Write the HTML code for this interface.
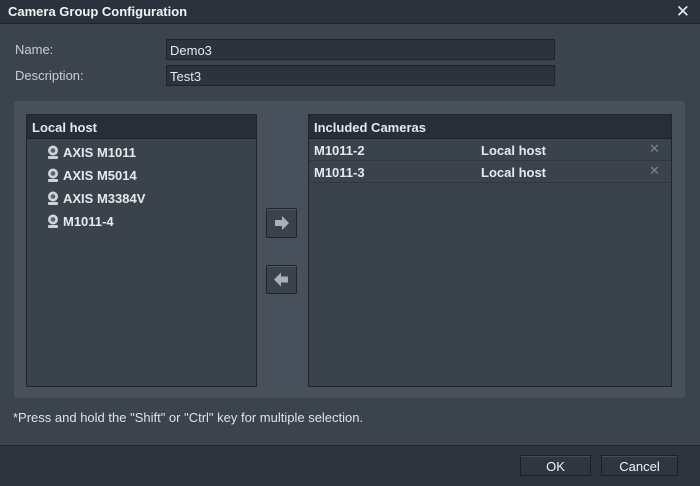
<!DOCTYPE html>
<html><head><style>
*{margin:0;padding:0;box-sizing:border-box}
body{width:700px;height:486px;background:#3b434c;font-family:"Liberation Sans",sans-serif;font-size:13px;color:#e6e9ec;position:relative;overflow:hidden}
.a{position:absolute}
.title{left:0;top:0;width:700px;height:24px;background:#2b323b;border-bottom:1px solid #1f252c;font-weight:bold;color:#f2f4f6;padding:4px 0 0 8px}
.lbl{color:#c9ced3}
.inp{background:#2c333c;border:1px solid #1e242b;height:21px;padding:3px 0 0 3px;color:#e8ebee}
.panel{left:14px;top:101px;width:671px;height:297px;background:#48515b;border-radius:3px}
.list{background:#3a424c;border:1px solid #1f252c}
.hdr{height:24px;background:#272e37;border-bottom:1px solid #1c2229;font-weight:bold;padding:5px 0 0 5px;color:#e6e9ec}
.item{height:23px;padding:5px 0 0 36px;position:relative;font-weight:bold;font-size:13px}
.cam{position:absolute;left:20px;top:5px;width:12px;height:14px}
.row{height:22px;border-bottom:1px solid #2f363f;padding:4px 0 0 5px;position:relative;font-weight:bold}
.btn{background:#3a424b;border:1px solid #1f252c;border-radius:2px;box-shadow:inset 0 1px 0 #4f5863}
.foot{left:0;top:445px;width:700px;height:41px;background:#2d343d;border-top:1px solid #20262d}
.b2{background:#2f3640;border:1px solid #1b2026;height:21px;text-align:center;padding-top:3px;color:#f0f2f4;box-shadow:inset 0 1px 0 #454d57}
</style></head><body>
<div class="a title">Camera Group Configuration</div>
<div class="a" style="right:10px;top:2px;font-size:17px;color:#e6e9ec">✕</div>
<div class="a lbl" style="left:15px;top:42px">Name:</div>
<div class="a lbl" style="left:15px;top:68px">Description:</div>
<div class="a inp" style="left:166px;top:39px;width:389px">Demo3</div>
<div class="a inp" style="left:166px;top:65px;width:389px">Test3</div>
<div class="a panel"></div>
<div class="a list" style="left:26px;top:114px;width:231px;height:273px">
<div class="hdr">Local host</div>
<div style="padding-top:1px">
<div class="item"><svg class="cam" viewBox="0 0 12 14"><circle cx="6" cy="5.5" r="5" fill="#cfd3d7"/><circle cx="6" cy="5.5" r="2.3" fill="#5a626b"/><rect x="1" y="11" width="10" height="3" rx="1" fill="#cfd3d7"/></svg>AXIS M1011</div>
<div class="item"><svg class="cam" viewBox="0 0 12 14"><circle cx="6" cy="5.5" r="5" fill="#cfd3d7"/><circle cx="6" cy="5.5" r="2.3" fill="#5a626b"/><rect x="1" y="11" width="10" height="3" rx="1" fill="#cfd3d7"/></svg>AXIS M5014</div>
<div class="item"><svg class="cam" viewBox="0 0 12 14"><circle cx="6" cy="5.5" r="5" fill="#cfd3d7"/><circle cx="6" cy="5.5" r="2.3" fill="#5a626b"/><rect x="1" y="11" width="10" height="3" rx="1" fill="#cfd3d7"/></svg>AXIS M3384V</div>
<div class="item"><svg class="cam" viewBox="0 0 12 14"><circle cx="6" cy="5.5" r="5" fill="#cfd3d7"/><circle cx="6" cy="5.5" r="2.3" fill="#5a626b"/><rect x="1" y="11" width="10" height="3" rx="1" fill="#cfd3d7"/></svg>M1011-4</div>
</div></div>
<div class="a btn" style="left:266px;top:208px;width:31px;height:30px"><svg width="31" height="30" style="position:absolute;left:-1px;top:-1px" viewBox="0 0 31 30"><path d="M9 12h7v-4l7 7-7 7v-4h-7z" fill="#a9afb5"/></svg></div>
<div class="a btn" style="left:266px;top:265px;width:31px;height:29px"><svg width="31" height="29" style="position:absolute;left:-1px;top:-1px" viewBox="0 0 31 29"><path d="M22 11.5h-7v-4l-7 7 7 7v-4h7z" fill="#a9afb5"/></svg></div>
<div class="a list" style="left:308px;top:114px;width:364px;height:273px">
<div class="hdr">Included Cameras</div>
<div class="row">M1011-2<span class="a" style="left:172px;top:4px">Local host</span><span class="a" style="left:340px;top:2px;color:#7b838b;font-weight:normal">✕</span></div>
<div class="row">M1011-3<span class="a" style="left:172px;top:4px">Local host</span><span class="a" style="left:340px;top:2px;color:#7b838b;font-weight:normal">✕</span></div>
</div>
<div class="a" style="left:13px;top:410px;color:#dfe3e6">*Press and hold the "Shift" or "Ctrl" key for multiple selection.</div>
<div class="a foot"></div>
<div class="a b2" style="left:520px;top:455px;width:71px">OK</div>
<div class="a b2" style="left:601px;top:455px;width:77px">Cancel</div>
</body></html>
